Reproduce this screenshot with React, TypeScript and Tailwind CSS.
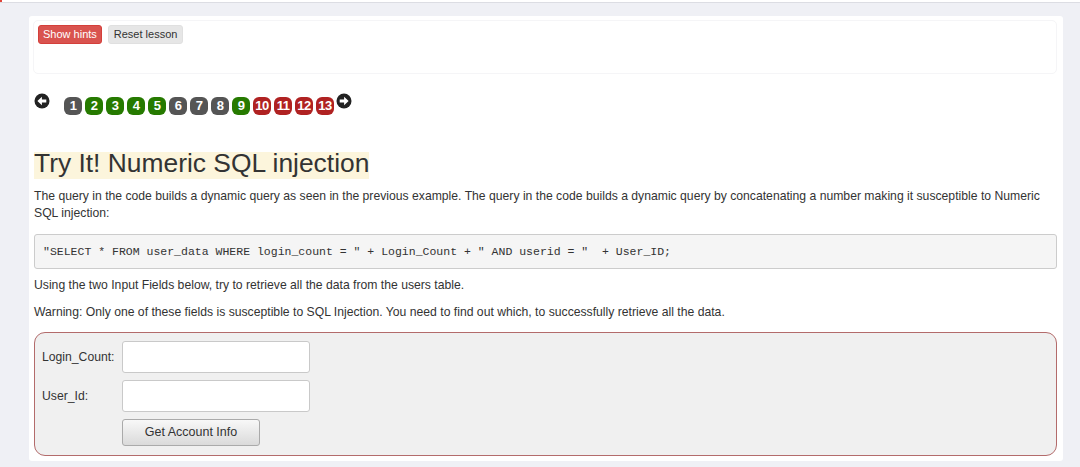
import React from 'react';

type PillState = 'todo' | 'done' | 'fail';

const pages: { n: number; state: PillState }[] = [
  { n: 1, state: 'todo' },
  { n: 2, state: 'done' },
  { n: 3, state: 'done' },
  { n: 4, state: 'done' },
  { n: 5, state: 'done' },
  { n: 6, state: 'todo' },
  { n: 7, state: 'todo' },
  { n: 8, state: 'todo' },
  { n: 9, state: 'done' },
  { n: 10, state: 'fail' },
  { n: 11, state: 'fail' },
  { n: 12, state: 'fail' },
  { n: 13, state: 'fail' },
];

const pillColor: Record<PillState, string> = {
  todo: 'bg-[#555555]',
  done: 'bg-[#267a00]',
  fail: 'bg-[#b02222]',
};

// circled arrow, like the font-awesome arrow-circle icons
function CircleArrow({ dir }: { dir: 'left' | 'right' }) {
  return (
    <svg width="16" height="16" viewBox="0 0 16 16" className={dir === 'right' ? 'rotate-180' : ''}>
      <circle cx="8" cy="8" r="7.5" fill="#222" />
      <path d="M3.4 8 L7.9 3.7 L7.9 6.4 L12.3 6.4 L12.3 9.6 L7.9 9.6 L7.9 12.3 Z" fill="#fff" />
    </svg>
  );
}

function LessonNav() {
  return (
    <div className="flex items-start mt-[20px] h-[22px] pl-px">
      <div className="mt-[-1px]">
        <CircleArrow dir="left" />
      </div>
      <div className="flex gap-[3px] ml-[14px] mt-[3px]">
        {pages.map((p) => (
          <div
            key={p.n}
            className={`w-[18px] h-[18px] rounded-[6px] ${pillColor[p.state]} text-white text-[13px] font-bold leading-[18px] text-center tracking-[-0.5px]`}
          >
            {p.n}
          </div>
        ))}
      </div>
      <div className="mt-[-1px] ml-[2px]">
        <CircleArrow dir="right" />
      </div>
    </div>
  );
}

export default function App() {
  return (
    <div className="w-[1080px] h-[467px] overflow-hidden bg-[#eff0f5] text-[#333] font-['Liberation_Sans',Arial,sans-serif]">
      {/* top strip */}
      <div className="h-[2px] bg-white flex">
        <span className="w-[2px] h-[2px] bg-[#e0453a]" />
      </div>
      <div className="h-px bg-[#dcdde3]" />

      <div className="ml-[29px] mr-[17px] mt-[13px] bg-white rounded-[3px] pt-[4px] pl-[4px] pr-[6px] pb-[5px]">
        {/* hints / reset */}
        <div className="h-[54px] border border-[#f5f5f7] rounded-[5px] pt-[4px] pl-[4px] flex items-start gap-[6px]">
          <button className="h-[19px] px-[4px] bg-[#d9534f] border border-[#d43f3a] rounded-[3px] text-white text-[11px] leading-[17px]">
            Show hints
          </button>
          <button className="h-[19px] px-[5px] bg-[#e6e6e6] border border-[#e0e0e0] rounded-[3px] text-[#333] text-[11px] leading-[17px]">
            Reset lesson
          </button>
        </div>

        <LessonNav />

        <div className="pl-px mt-[36px]">
          <h2 className="inline-block h-[27px] bg-[#fcf5dc] text-[26.4px] leading-[23px] font-normal text-[#333]">
            Try It! Numeric SQL injection
          </h2>
        </div>

        <div className="pl-px text-[12.2px] leading-[17px]">
          <p className="mt-[9px]">
            The query in the code builds a dynamic query as seen in the previous example. The query in the code builds a dynamic query by concatenating a number making it susceptible to Numeric SQL injection:
          </p>

          <pre className="mt-[12px] h-[35px] border border-[#cccccc] bg-[#f5f5f5] rounded-[3px] pl-[8px] font-['Liberation_Mono','Courier_New',monospace] text-[11.5px] leading-[33px] text-[#333]">
            {'"SELECT * FROM user_data WHERE login_count = " + Login_Count + " AND userid = "  + User_ID;'}
          </pre>

          <p className="mt-[8px]">
            Using the two Input Fields below, try to retrieve all the data from the users table.
          </p>
          <p className="mt-[10px]">
            Warning: Only one of these fields is susceptible to SQL Injection. You need to find out which, to successfully retrieve all the data.
          </p>

          {/* form */}
          <div className="mt-[11px] h-[124px] border border-[#b36b6b] rounded-[11px] bg-[#f0f0f0] pt-[8px] pl-[7px]">
            <div className="grid grid-cols-[80px_188px] gap-y-[7px] items-center">
              <label className="text-[12.2px]">Login_Count:</label>
              <input className="h-[32px] bg-white border border-[#c9c9c9] rounded-[3px] outline-none" />
              <label className="text-[12.2px]">User_Id:</label>
              <input className="h-[32px] bg-white border border-[#c9c9c9] rounded-[3px] outline-none" />
              <div />
              <button className="w-[138px] h-[27px] border border-[#aaaaaa] rounded-[3px] bg-gradient-to-b from-[#f8f8f8] to-[#dadada] text-[12.5px] text-[#333]">
                Get Account Info
              </button>
            </div>
          </div>
        </div>
      </div>
    </div>
  );
}
